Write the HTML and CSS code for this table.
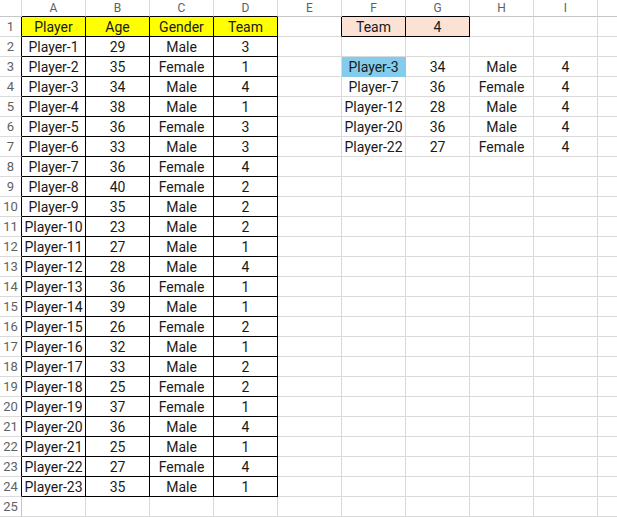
FILE: index.html
```html
<!DOCTYPE html>
<html>
<head>
<meta charset="utf-8">
<link rel="stylesheet" href="styles.css">
</head>
<body>
<div class="sheet">
  <div class="ch corner"></div>
  <div class="ch tb">A</div><div class="ch tb">B</div><div class="ch tb">C</div><div class="ch tb">D</div><div class="ch lb">E</div><div class="ch tb">F</div><div class="ch tb">G</div><div class="ch">H</div><div class="ch">I</div><div class="ch last"></div>

  <div class="rh rb">1</div>
  <div class="c t yel">Player</div><div class="c t yel">Age</div><div class="c t yel">Gender</div><div class="c t yel">Team</div><div class="c lb"></div><div class="c t peach">Team</div><div class="c t peach">4</div><div class="c"></div><div class="c"></div><div class="c last"></div>

  <div class="rh rb">2</div>
  <div class="c t">Player-1</div><div class="c t">29</div><div class="c t">Male</div><div class="c t">3</div><div class="c"></div><div class="c"></div><div class="c"></div><div class="c"></div><div class="c"></div><div class="c last"></div>

  <div class="rh rb">3</div>
  <div class="c t">Player-2</div><div class="c t">35</div><div class="c t">Female</div><div class="c t">1</div><div class="c"></div><div class="c blue">Player-3</div><div class="c">34</div><div class="c">Male</div><div class="c">4</div><div class="c last"></div>

  <div class="rh rb">4</div>
  <div class="c t">Player-3</div><div class="c t">34</div><div class="c t">Male</div><div class="c t">4</div><div class="c"></div><div class="c">Player-7</div><div class="c">36</div><div class="c">Female</div><div class="c">4</div><div class="c last"></div>

  <div class="rh rb">5</div>
  <div class="c t">Player-4</div><div class="c t">38</div><div class="c t">Male</div><div class="c t">1</div><div class="c"></div><div class="c">Player-12</div><div class="c">28</div><div class="c">Male</div><div class="c">4</div><div class="c last"></div>

  <div class="rh rb">6</div>
  <div class="c t">Player-5</div><div class="c t">36</div><div class="c t">Female</div><div class="c t">3</div><div class="c"></div><div class="c">Player-20</div><div class="c">36</div><div class="c">Male</div><div class="c">4</div><div class="c last"></div>

  <div class="rh rb">7</div>
  <div class="c t">Player-6</div><div class="c t">33</div><div class="c t">Male</div><div class="c t">3</div><div class="c"></div><div class="c">Player-22</div><div class="c">27</div><div class="c">Female</div><div class="c">4</div><div class="c last"></div>

  <div class="rh rb">8</div>
  <div class="c t">Player-7</div><div class="c t">36</div><div class="c t">Female</div><div class="c t">4</div><div class="c"></div><div class="c"></div><div class="c"></div><div class="c"></div><div class="c"></div><div class="c last"></div>

  <div class="rh rb">9</div>
  <div class="c t">Player-8</div><div class="c t">40</div><div class="c t">Female</div><div class="c t">2</div><div class="c"></div><div class="c"></div><div class="c"></div><div class="c"></div><div class="c"></div><div class="c last"></div>

  <div class="rh rb">10</div>
  <div class="c t">Player-9</div><div class="c t">35</div><div class="c t">Male</div><div class="c t">2</div><div class="c"></div><div class="c"></div><div class="c"></div><div class="c"></div><div class="c"></div><div class="c last"></div>

  <div class="rh rb">11</div>
  <div class="c t">Player-10</div><div class="c t">23</div><div class="c t">Male</div><div class="c t">2</div><div class="c"></div><div class="c"></div><div class="c"></div><div class="c"></div><div class="c"></div><div class="c last"></div>

  <div class="rh rb">12</div>
  <div class="c t">Player-11</div><div class="c t">27</div><div class="c t">Male</div><div class="c t">1</div><div class="c"></div><div class="c"></div><div class="c"></div><div class="c"></div><div class="c"></div><div class="c last"></div>

  <div class="rh rb">13</div>
  <div class="c t">Player-12</div><div class="c t">28</div><div class="c t">Male</div><div class="c t">4</div><div class="c"></div><div class="c"></div><div class="c"></div><div class="c"></div><div class="c"></div><div class="c last"></div>

  <div class="rh rb">14</div>
  <div class="c t">Player-13</div><div class="c t">36</div><div class="c t">Female</div><div class="c t">1</div><div class="c"></div><div class="c"></div><div class="c"></div><div class="c"></div><div class="c"></div><div class="c last"></div>

  <div class="rh rb">15</div>
  <div class="c t">Player-14</div><div class="c t">39</div><div class="c t">Male</div><div class="c t">1</div><div class="c"></div><div class="c"></div><div class="c"></div><div class="c"></div><div class="c"></div><div class="c last"></div>

  <div class="rh rb">16</div>
  <div class="c t">Player-15</div><div class="c t">26</div><div class="c t">Female</div><div class="c t">2</div><div class="c"></div><div class="c"></div><div class="c"></div><div class="c"></div><div class="c"></div><div class="c last"></div>

  <div class="rh rb">17</div>
  <div class="c t">Player-16</div><div class="c t">32</div><div class="c t">Male</div><div class="c t">1</div><div class="c"></div><div class="c"></div><div class="c"></div><div class="c"></div><div class="c"></div><div class="c last"></div>

  <div class="rh rb">18</div>
  <div class="c t">Player-17</div><div class="c t">33</div><div class="c t">Male</div><div class="c t">2</div><div class="c"></div><div class="c"></div><div class="c"></div><div class="c"></div><div class="c"></div><div class="c last"></div>

  <div class="rh rb">19</div>
  <div class="c t">Player-18</div><div class="c t">25</div><div class="c t">Female</div><div class="c t">2</div><div class="c"></div><div class="c"></div><div class="c"></div><div class="c"></div><div class="c"></div><div class="c last"></div>

  <div class="rh rb">20</div>
  <div class="c t">Player-19</div><div class="c t">37</div><div class="c t">Female</div><div class="c t">1</div><div class="c"></div><div class="c"></div><div class="c"></div><div class="c"></div><div class="c"></div><div class="c last"></div>

  <div class="rh rb">21</div>
  <div class="c t">Player-20</div><div class="c t">36</div><div class="c t">Male</div><div class="c t">4</div><div class="c"></div><div class="c"></div><div class="c"></div><div class="c"></div><div class="c"></div><div class="c last"></div>

  <div class="rh rb">22</div>
  <div class="c t">Player-21</div><div class="c t">25</div><div class="c t">Male</div><div class="c t">1</div><div class="c"></div><div class="c"></div><div class="c"></div><div class="c"></div><div class="c"></div><div class="c last"></div>

  <div class="rh rb">23</div>
  <div class="c t">Player-22</div><div class="c t">27</div><div class="c t">Female</div><div class="c t">4</div><div class="c"></div><div class="c"></div><div class="c"></div><div class="c"></div><div class="c"></div><div class="c last"></div>

  <div class="rh rb">24</div>
  <div class="c t">Player-23</div><div class="c t">35</div><div class="c t">Male</div><div class="c t">1</div><div class="c"></div><div class="c"></div><div class="c"></div><div class="c"></div><div class="c"></div><div class="c last"></div>

  <div class="rh">25</div>
  <div class="c"></div><div class="c"></div><div class="c"></div><div class="c"></div><div class="c"></div><div class="c"></div><div class="c"></div><div class="c"></div><div class="c"></div><div class="c last"></div>
</div>
</body>
</html>
```
FILE: styles.css
```css
html, body {
  margin: 0;
  padding: 0;
  background: #ffffff;
}

.sheet {
  display: grid;
  grid-template-columns: 22px repeat(9, 64px) 1fr;
  grid-template-rows: 17px repeat(25, 20px);
  width: 617px;
  font-family: Roboto, "Liberation Sans", sans-serif;
}

.sheet > div {
  box-sizing: border-box;
  border-right: 1px solid #dadada;
  border-bottom: 1px solid #dadada;
  white-space: nowrap;
  overflow: hidden;
}

.ch {
  font-size: 12px;
  color: #616161;
  text-align: center;
  line-height: 16px;
  background: #ffffff;
  border-bottom-color: #c6c6c6 !important;
}

.ch.tb {
  border-bottom-color: #000 !important;
}

.rh {
  font-size: 13px;
  color: #616161;
  text-align: center;
  line-height: 18px;
  padding-top: 1px;
  border-right-color: #c6c6c6 !important;
}

.rh.rb {
  border-right-color: #000 !important;
}

.c {
  font-size: 14px;
  color: #1a1a1a;
  text-align: center;
  line-height: 18px;
  padding-top: 1px;
}

.c.t {
  border-right-color: #000;
  border-bottom-color: #000;
}

.lb {
  border-right-color: #000 !important;
}

.ch.lb {
  border-right-color: #dadada !important;
}

.last {
  border-right: none !important;
}

.yel {
  background: #ffff00;
}

.peach {
  background: #fbe2d5;
}

.blue {
  background: #83cceb;
  border-right-color: #83cceb !important;
  border-bottom-color: #83cceb !important;
}
```
